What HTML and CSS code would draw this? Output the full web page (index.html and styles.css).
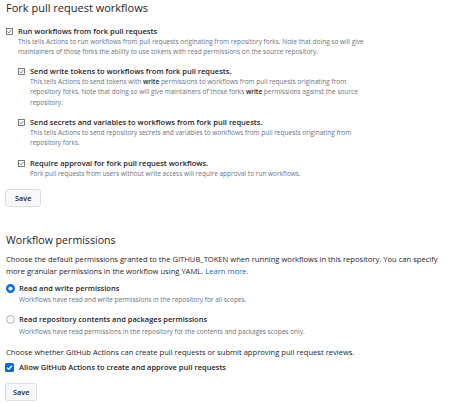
FILE: index.html
```html
<!DOCTYPE html>
<html lang="en">
<head>
<meta charset="utf-8">
<title>Actions settings</title>
<link rel="stylesheet" href="styles.css">
</head>
<body>
<section class="section">
  <h2 class="section-title title-fork">Fork pull request workflows</h2>
  <div class="opt opt-top">
    <svg class="glyph-box" width="7" height="7" viewBox="0 0 7 7"><rect x="0.5" y="0.5" width="6" height="6" fill="none" stroke="#5c5c5c" stroke-width="0.8"/><path d="M1.6 3.6 L2.9 4.9 L5.4 2.1" fill="none" stroke="#5c5c5c" stroke-width="0.8"/></svg>
    <div class="opt-body">
      <div class="opt-label">Run workflows from fork pull requests</div>
      <div class="opt-desc">This tells Actions to run workflows from pull requests originating from repository forks. Note that doing so will give<br>maintainers of those forks the ability to use tokens with read permissions on the source repository.</div>
      <div class="opt opt-nested">
        <svg class="glyph-box" width="7" height="7" viewBox="0 0 7 7"><rect x="0.5" y="0.5" width="6" height="6" fill="none" stroke="#5c5c5c" stroke-width="0.8"/><path d="M1.6 3.6 L2.9 4.9 L5.4 2.1" fill="none" stroke="#5c5c5c" stroke-width="0.8"/></svg>
        <div class="opt-body">
          <div class="opt-label">Send write tokens to workflows from fork pull requests.</div>
          <div class="opt-desc">This tells Actions to send tokens with <strong>write</strong> permissions to workflows from pull requests originating from<br>repository forks. Note that doing so will give maintainers of those forks <strong>write</strong> permissions against the source<br>repository.</div>
        </div>
      </div>
      <div class="opt opt-nested">
        <svg class="glyph-box" width="7" height="7" viewBox="0 0 7 7"><rect x="0.5" y="0.5" width="6" height="6" fill="none" stroke="#5c5c5c" stroke-width="0.8"/><path d="M1.6 3.6 L2.9 4.9 L5.4 2.1" fill="none" stroke="#5c5c5c" stroke-width="0.8"/></svg>
        <div class="opt-body">
          <div class="opt-label">Send secrets and variables to workflows from fork pull requests.</div>
          <div class="opt-desc">This tells Actions to send repository secrets and variables to workflows from pull requests originating from<br>repository forks.</div>
        </div>
      </div>
      <div class="opt opt-nested">
        <svg class="glyph-box" width="7" height="7" viewBox="0 0 7 7"><rect x="0.5" y="0.5" width="6" height="6" fill="none" stroke="#5c5c5c" stroke-width="0.8"/><path d="M1.6 3.6 L2.9 4.9 L5.4 2.1" fill="none" stroke="#5c5c5c" stroke-width="0.8"/></svg>
        <div class="opt-body">
          <div class="opt-label">Require approval for fork pull request workflows.</div>
          <div class="opt-desc">Fork pull requests from users without write access will require approval to run workflows.</div>
        </div>
      </div>
    </div>
  </div>
  <button class="btn btn-first" type="button">Save</button>
</section>

<section class="section section-perms">
  <h2 class="section-title">Workflow permissions</h2>
  <p class="para">Choose the default permissions granted to the GITHUB_TOKEN when running workflows in this repository. You can specify<br>more granular permissions in the workflow using YAML. <a class="link" href="#">Learn more.</a></p>
  <div class="opt opt-radio">
    <svg class="radio" width="9" height="9" viewBox="0 0 9 9"><circle cx="4.5" cy="4.5" r="3.3" fill="#fff" stroke="#0969da" stroke-width="2.4"/></svg>
    <div class="opt-body">
      <div class="opt-label">Read and write permissions</div>
      <div class="opt-desc radio-desc">Workflows have read and write permissions in the repository for all scopes.</div>
    </div>
  </div>
  <div class="opt opt-radio">
    <svg class="radio" width="9" height="9" viewBox="0 0 9 9"><circle cx="4.5" cy="4.5" r="3.9" fill="#fff" stroke="#8c959f" stroke-width="0.8"/></svg>
    <div class="opt-body">
      <div class="opt-label">Read repository contents and packages permissions</div>
      <div class="opt-desc radio-desc">Workflows have read permissions in the repository for the contents and packages scopes only.</div>
    </div>
  </div>
  <p class="para para-pr">Choose whether GitHub Actions can create pull requests or submit approving pull request reviews.</p>
  <div class="opt opt-allow">
    <svg class="check-blue" width="9" height="9" viewBox="0 0 9 9"><rect x="0" y="0" width="9" height="9" rx="1.6" fill="#0969da"/><path d="M2.1 4.6 L3.8 6.2 L6.9 2.8" fill="none" stroke="#fff" stroke-width="1.3"/></svg>
    <div class="opt-label">Allow GitHub Actions to create and approve pull requests</div>
  </div>
  <button class="btn btn-second" type="button">Save</button>
</section>
</body>
</html>
```

FILE: styles.css
```css
html, body {
  background: #ffffff;
}
body {
  margin: 0;
  padding: 0 0 0 6px;
  font-family: "Open Sans", "Noto Sans", "Liberation Sans", sans-serif;
  color: #1f2328;
}
.section-title {
  margin: 0;
  font-size: 10.6px;
  font-weight: 400;
  line-height: 16px;
  color: #1f2328;
}
.title-fork {
  font-size: 11px;
}
.opt {
  display: flex;
  align-items: flex-start;
  gap: 5px;
}
.opt-top {
  margin-top: 9.5px;
}
.glyph-box {
  flex: none;
  margin-top: 2px;
}
.opt-nested {
  margin-top: 9px;
}
.opt-body {
  display: flex;
  flex-direction: column;
}
.opt-label {
  font-size: 7.5px;
  font-weight: 600;
  line-height: 11px;
  color: #1f2328;
  white-space: nowrap;
}
.opt-desc {
  font-size: 6.5px;
  line-height: 10.3px;
  color: #6a737d;
  white-space: nowrap;
}
.opt-desc strong {
  font-weight: 600;
  color: #1f2328;
}
.btn {
  display: block;
  height: 18px;
  margin-top: 10px;
  margin-left: -1px;
  padding: 0 9px;
  font-family: inherit;
  font-size: 7.3px;
  font-weight: 600;
  line-height: 16px;
  color: #1f2328;
  background: #f6f8fa;
  border: 1px solid #d8dee4;
  border-radius: 3px;
}
.btn-second {
  padding: 0 7px;
  margin-top: 9.5px;
}
.section-perms {
  margin-top: 25px;
}
.para {
  margin: 5px 0 0;
  font-size: 7.6px;
  line-height: 12px;
  color: #1f2328;
  white-space: nowrap;
}
.link {
  color: #0969da;
  text-decoration: none;
}
.opt-radio {
  margin-top: 5.8px;
  gap: 4px;
}
.opt-radio + .opt-radio {
  margin-top: 9px;
}
.radio {
  flex: none;
  margin-top: 1px;
}
.radio-desc {
  margin-top: 1.5px;
}
.para-pr {
  margin-top: 8.4px;
}
.opt-allow {
  margin-top: 4.5px;
  margin-left: -1px;
  gap: 5px;
}
.check-blue {
  flex: none;
  margin-top: 1px;
}
```
